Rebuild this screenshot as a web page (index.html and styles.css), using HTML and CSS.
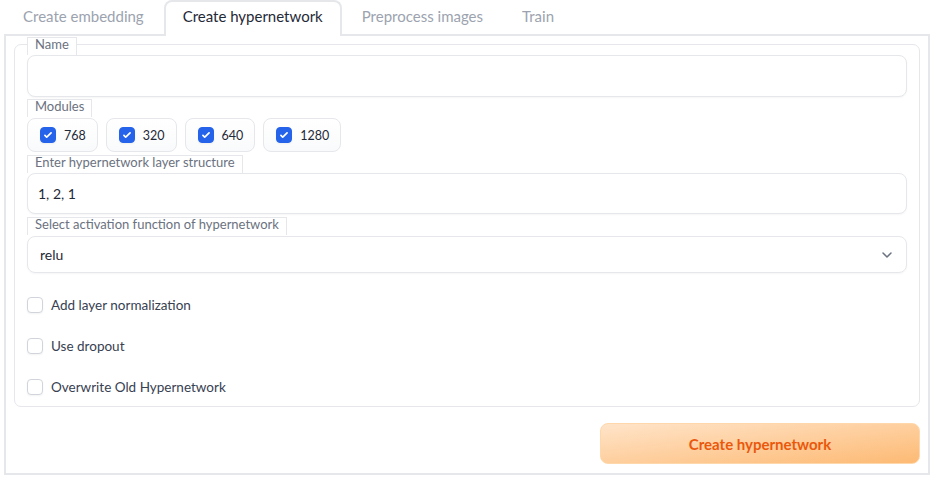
FILE: index.html
```html
<!DOCTYPE html>
<html lang="en">
<head>
<meta charset="utf-8">
<title>Create hypernetwork</title>
<link rel="stylesheet" href="styles.css">
</head>
<body>
<div class="app">
  <div class="tabs">
    <button class="tab">Create embedding</button>
    <button class="tab active">Create hypernetwork</button>
    <button class="tab">Preprocess images</button>
    <button class="tab">Train</button>
  </div>
  <div class="panel">
    <div class="form">
      <div class="field field-first">
        <span class="label">Name</span>
        <div class="input"></div>
      </div>
      <div class="field">
        <span class="label">Modules</span>
        <div class="pills">
          <label class="pill"><span class="cb checked"><svg viewBox="0 0 16 16"><path d="M12.207 4.793a1 1 0 010 1.414l-5 5a1 1 0 01-1.414 0l-2-2a1 1 0 011.414-1.414L6.5 9.086l4.293-4.293a1 1 0 011.414 0z" fill="#fff"/></svg></span>768</label>
          <label class="pill"><span class="cb checked"><svg viewBox="0 0 16 16"><path d="M12.207 4.793a1 1 0 010 1.414l-5 5a1 1 0 01-1.414 0l-2-2a1 1 0 011.414-1.414L6.5 9.086l4.293-4.293a1 1 0 011.414 0z" fill="#fff"/></svg></span>320</label>
          <label class="pill"><span class="cb checked"><svg viewBox="0 0 16 16"><path d="M12.207 4.793a1 1 0 010 1.414l-5 5a1 1 0 01-1.414 0l-2-2a1 1 0 011.414-1.414L6.5 9.086l4.293-4.293a1 1 0 011.414 0z" fill="#fff"/></svg></span>640</label>
          <label class="pill"><span class="cb checked"><svg viewBox="0 0 16 16"><path d="M12.207 4.793a1 1 0 010 1.414l-5 5a1 1 0 01-1.414 0l-2-2a1 1 0 011.414-1.414L6.5 9.086l4.293-4.293a1 1 0 011.414 0z" fill="#fff"/></svg></span>1280</label>
        </div>
      </div>
      <div class="field field-gap">
        <span class="label">Enter hypernetwork layer structure</span>
        <div class="input input-text">1, 2, 1</div>
      </div>
      <div class="field field-gap">
        <span class="label">Select activation function of hypernetwork</span>
        <div class="select"><span>relu</span><svg class="chev" viewBox="0 0 10 6"><path d="M1 1L5 5L9 1" fill="none" stroke="#6b7280" stroke-width="1.5" stroke-linecap="round" stroke-linejoin="round"/></svg></div>
      </div>
      <div class="checks">
        <label class="check"><span class="cb"></span>Add layer normalization</label>
        <label class="check"><span class="cb"></span>Use dropout</label>
        <label class="check"><span class="cb"></span>Overwrite Old Hypernetwork</label>
      </div>
    </div>
    <div class="actions">
      <button class="primary">Create hypernetwork</button>
    </div>
  </div>
</div>
</body>
</html>
```

FILE: styles.css
```css
* { box-sizing: border-box; }
html, body { margin: 0; padding: 0; background: #fff; }
body { font-family: "Lato", "Noto Sans", sans-serif; color: #374151; }

.app { padding: 0 6px 0 4px; }

.tabs { display: flex; height: 36px; margin-bottom: -2px; position: relative; z-index: 1; }
.tab {
  font-family: inherit; font-size: 15px; line-height: 20px;
  color: #9ca3af; background: transparent;
  border: 2px solid transparent; border-bottom: 0;
  padding: 4px 17px 10px; margin: 0 1px 0 0;
  border-radius: 8px 8px 0 0; height: 36px; cursor: pointer;
}
.tab.active { color: #1f2937; background: #fff; border-color: #e5e7eb; }

.panel {
  border: 2px solid #e5e7eb;
  padding: 8px 8px 9px;
}

.form {
  border: 1px solid #e5e7eb; border-radius: 7px;
  padding: 0 12px 11px;
}

.field { display: flex; flex-direction: column; align-items: flex-start; margin-top: 2px; }
.field-first { margin-top: -8px; }
.field-gap { margin-top: 3px; }

.label {
  display: inline-block; background: #fff;
  border: 1px solid #e5e7eb; border-bottom: 0;
  font-size: 13px; line-height: 13px; height: 18px; color: #6b7280;
  padding: 0 7px 4px;
}

.input {
  width: 100%; height: 42px;
  border: 1px solid #e5e7eb; border-radius: 8px;
  box-shadow: 0 1px 2px rgba(0,0,0,0.04);
  background: #fff;
}
.input-text {
  height: 41px; padding: 0 10px;
  display: flex; align-items: center;
  font-size: 14px; color: #1f2937;
}

.pills { display: flex; gap: 8px; margin-top: 1px; }
.pill {
  display: flex; align-items: center; gap: 8px;
  height: 34px; padding: 0 11px 0 12px;
  border: 1px solid #e5e7eb; border-radius: 8px;
  background: linear-gradient(#ffffff, #f9fafb);
  font-size: 12.5px; color: #1f2937;
}

.cb {
  width: 16px; height: 16px; flex: none;
  border: 1px solid #d1d5db; border-radius: 4px; background: #fff;
  box-shadow: 0 1px 2px rgba(0,0,0,0.05);
  display: inline-flex;
}
.cb.checked { background: #2563eb; border-color: #2563eb; }
.cb svg { width: 100%; height: 100%; }

.select {
  width: 100%; height: 37px; margin-top: 1px;
  border: 1px solid #e5e7eb; border-radius: 8px;
  box-shadow: 0 1px 2px rgba(0,0,0,0.04);
  display: flex; align-items: center; justify-content: space-between;
  padding: 0 14px 0 12px;
  font-size: 14px; color: #1f2937;
}
.chev { width: 10px; height: 6px; }

.checks { display: flex; flex-direction: column; gap: 25px; margin-top: 24px; }
.check {
  display: flex; align-items: center; gap: 8px;
  height: 16px; font-size: 13.5px; color: #374151;
}

.actions { display: flex; justify-content: flex-end; margin-top: 16px; }
.primary {
  width: 320px; height: 41px;
  font-family: inherit; font-size: 15px; font-weight: 700; color: #ea580c;
  border: 1px solid #fed7aa; border-radius: 8px;
  background: linear-gradient(to bottom right, #ffe4c9, #fdba74);
  cursor: pointer;
}
```
